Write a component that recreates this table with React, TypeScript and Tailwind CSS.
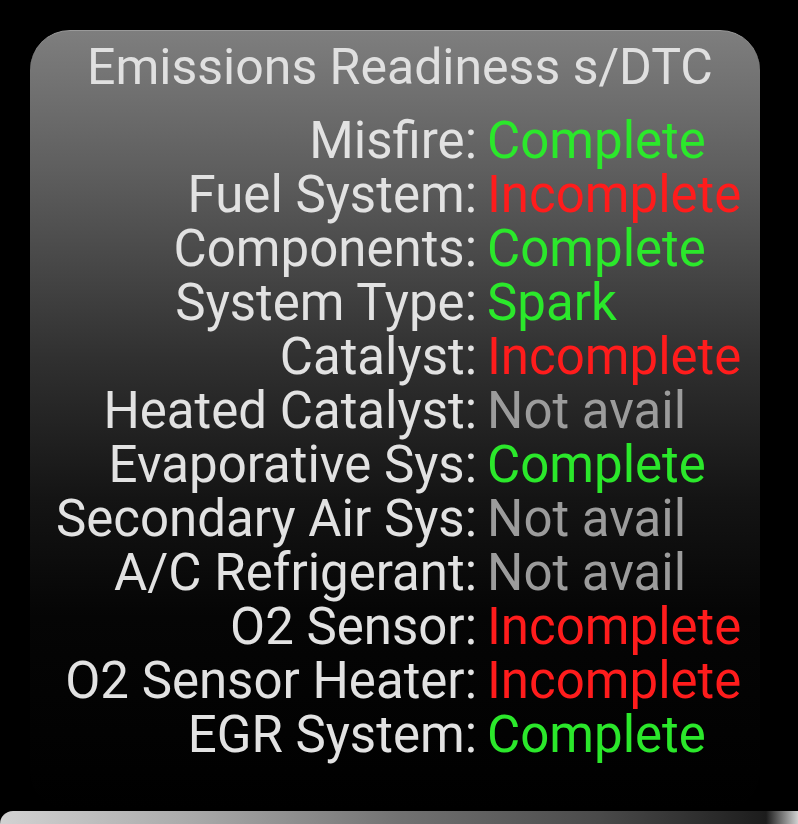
import React from "react";

type Status = "ok" | "bad" | "na";

const rows: { label: string; value: string; status: Status }[] = [
  { label: "Misfire:", value: "Complete", status: "ok" },
  { label: "Fuel System:", value: "Incomplete", status: "bad" },
  { label: "Components:", value: "Complete", status: "ok" },
  { label: "System Type:", value: "Spark", status: "ok" },
  { label: "Catalyst:", value: "Incomplete", status: "bad" },
  { label: "Heated Catalyst:", value: "Not avail", status: "na" },
  { label: "Evaporative Sys:", value: "Complete", status: "ok" },
  { label: "Secondary Air Sys:", value: "Not avail", status: "na" },
  { label: "A/C Refrigerant:", value: "Not avail", status: "na" },
  { label: "O2 Sensor:", value: "Incomplete", status: "bad" },
  { label: "O2 Sensor Heater:", value: "Incomplete", status: "bad" },
  { label: "EGR System:", value: "Complete", status: "ok" },
];

const statusColor: Record<Status, string> = {
  ok: "text-[#2be82b]",
  bad: "text-[#ff1c1c]",
  na: "text-[#9c9c9c]",
};

export default function App() {
  return (
    <div className="flex h-[824px] w-[798px] flex-col overflow-hidden bg-black font-['Roboto',sans-serif]">
      <div className="flex-1 pl-[30px] pt-[30px]">
        <div className="h-[781px] w-[730px] rounded-[40px] border-t border-[#9a9a9a] bg-[linear-gradient(to_bottom,#7e7e7e_0%,#5e5e5e_18%,#303030_42%,#141414_60%,#050505_75%,#000_100%)] pt-[6px]">
          <h1 className="pl-[10px] text-center text-[50px] leading-[60px] text-[#e0e0e0]">
            Emissions Readiness s/DTC
          </h1>
          <div className="mt-[17px] grid grid-cols-[447px_1fr] gap-x-[10px] text-[51px] leading-[54px]">
            {rows.map((r) => (
              <React.Fragment key={r.label}>
                <div className="text-right text-[#e2e2e2]">{r.label}</div>
                <div className={statusColor[r.status]}>{r.value}</div>
              </React.Fragment>
            ))}
          </div>
        </div>
      </div>
      <div className="h-[13px] rounded-tl-[14px] bg-[linear-gradient(to_right,#d2d2d2_0%,#a8a8a8_25%,#727272_50%,#4a4a4a_75%,#1c1c1c_96%,#d0d0d0_100%)]" />
    </div>
  );
}
